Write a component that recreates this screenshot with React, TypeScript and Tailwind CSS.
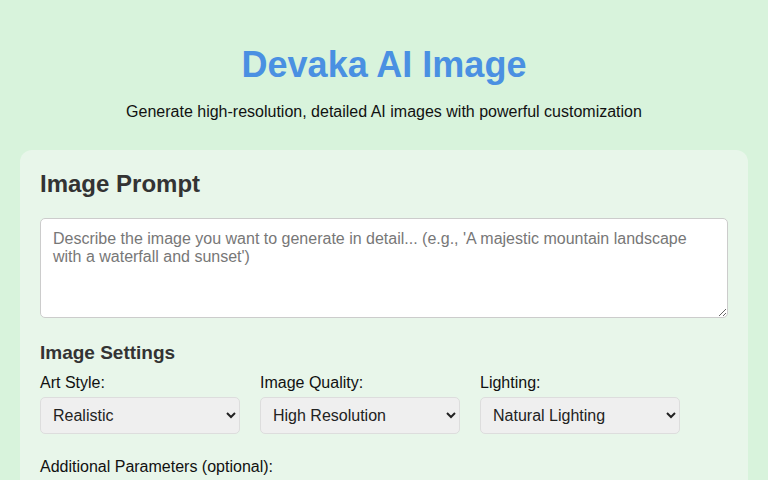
import { useState } from "react";

const selects = [
  { label: "Art Style:", value: "Realistic", options: ["Realistic", "Anime", "Digital Art", "Oil Painting", "Watercolor"] },
  { label: "Image Quality:", value: "High Resolution", options: ["Standard", "High Resolution", "Ultra HD"] },
  { label: "Lighting:", value: "Natural Lighting", options: ["Natural Lighting", "Studio Lighting", "Dramatic", "Neon"] },
];

export default function App() {
  const [prompt, setPrompt] = useState("");

  return (
    <div className="min-h-[480px] bg-[#d8f3dc] px-5 pt-[44px] pb-10 font-['Liberation_Sans',Arial,sans-serif] text-[#111]">
      <header className="text-center">
        <h1 className="text-[36px] font-bold leading-[41px] text-[#4a90e2]">Devaka AI Image</h1>
        <p className="mt-[18px] text-[16px] leading-[18px]">
          Generate high-resolution, detailed AI images with powerful customization
        </p>
      </header>

      <main className="mt-[29px] rounded-xl bg-[#e8f6ea] p-5">
        <h2 className="text-[24px] font-bold leading-[28px] text-[#333]">Image Prompt</h2>
        <textarea
          value={prompt}
          onChange={(e) => setPrompt(e.target.value)}
          placeholder="Describe the image you want to generate in detail... (e.g., 'A majestic mountain landscape with a waterfall and sunset')"
          className="mt-5 block h-[100px] w-full rounded-[5px] border border-[#ccc] bg-white px-3 py-[11px] text-[16px] leading-[18px] placeholder:text-[#777]"
        />

        <h3 className="mt-[24px] text-[19px] font-bold leading-[22px] text-[#333]">Image Settings</h3>
        <div className="mt-[10px] flex gap-5">
          {selects.map((s) => (
            <div key={s.label} className="flex w-[200px] flex-col">
              <label className="text-[16px] leading-[18px]">{s.label}</label>
              <select
                defaultValue={s.value}
                className="mt-[5px] h-[37px] w-[200px] rounded-[5px] border border-[#ddd] bg-[#efefef] px-[8px] text-[16px] text-[#222]"
              >
                {s.options.map((o) => (
                  <option key={o}>{o}</option>
                ))}
              </select>
            </div>
          ))}
        </div>

        <p className="mt-6 text-[16px] leading-[18px]">Additional Parameters (optional):</p>
        <input className="mt-[6px] h-[37px] w-full rounded-[5px] border border-[#ccc] bg-white px-3" />
      </main>
    </div>
  );
}
